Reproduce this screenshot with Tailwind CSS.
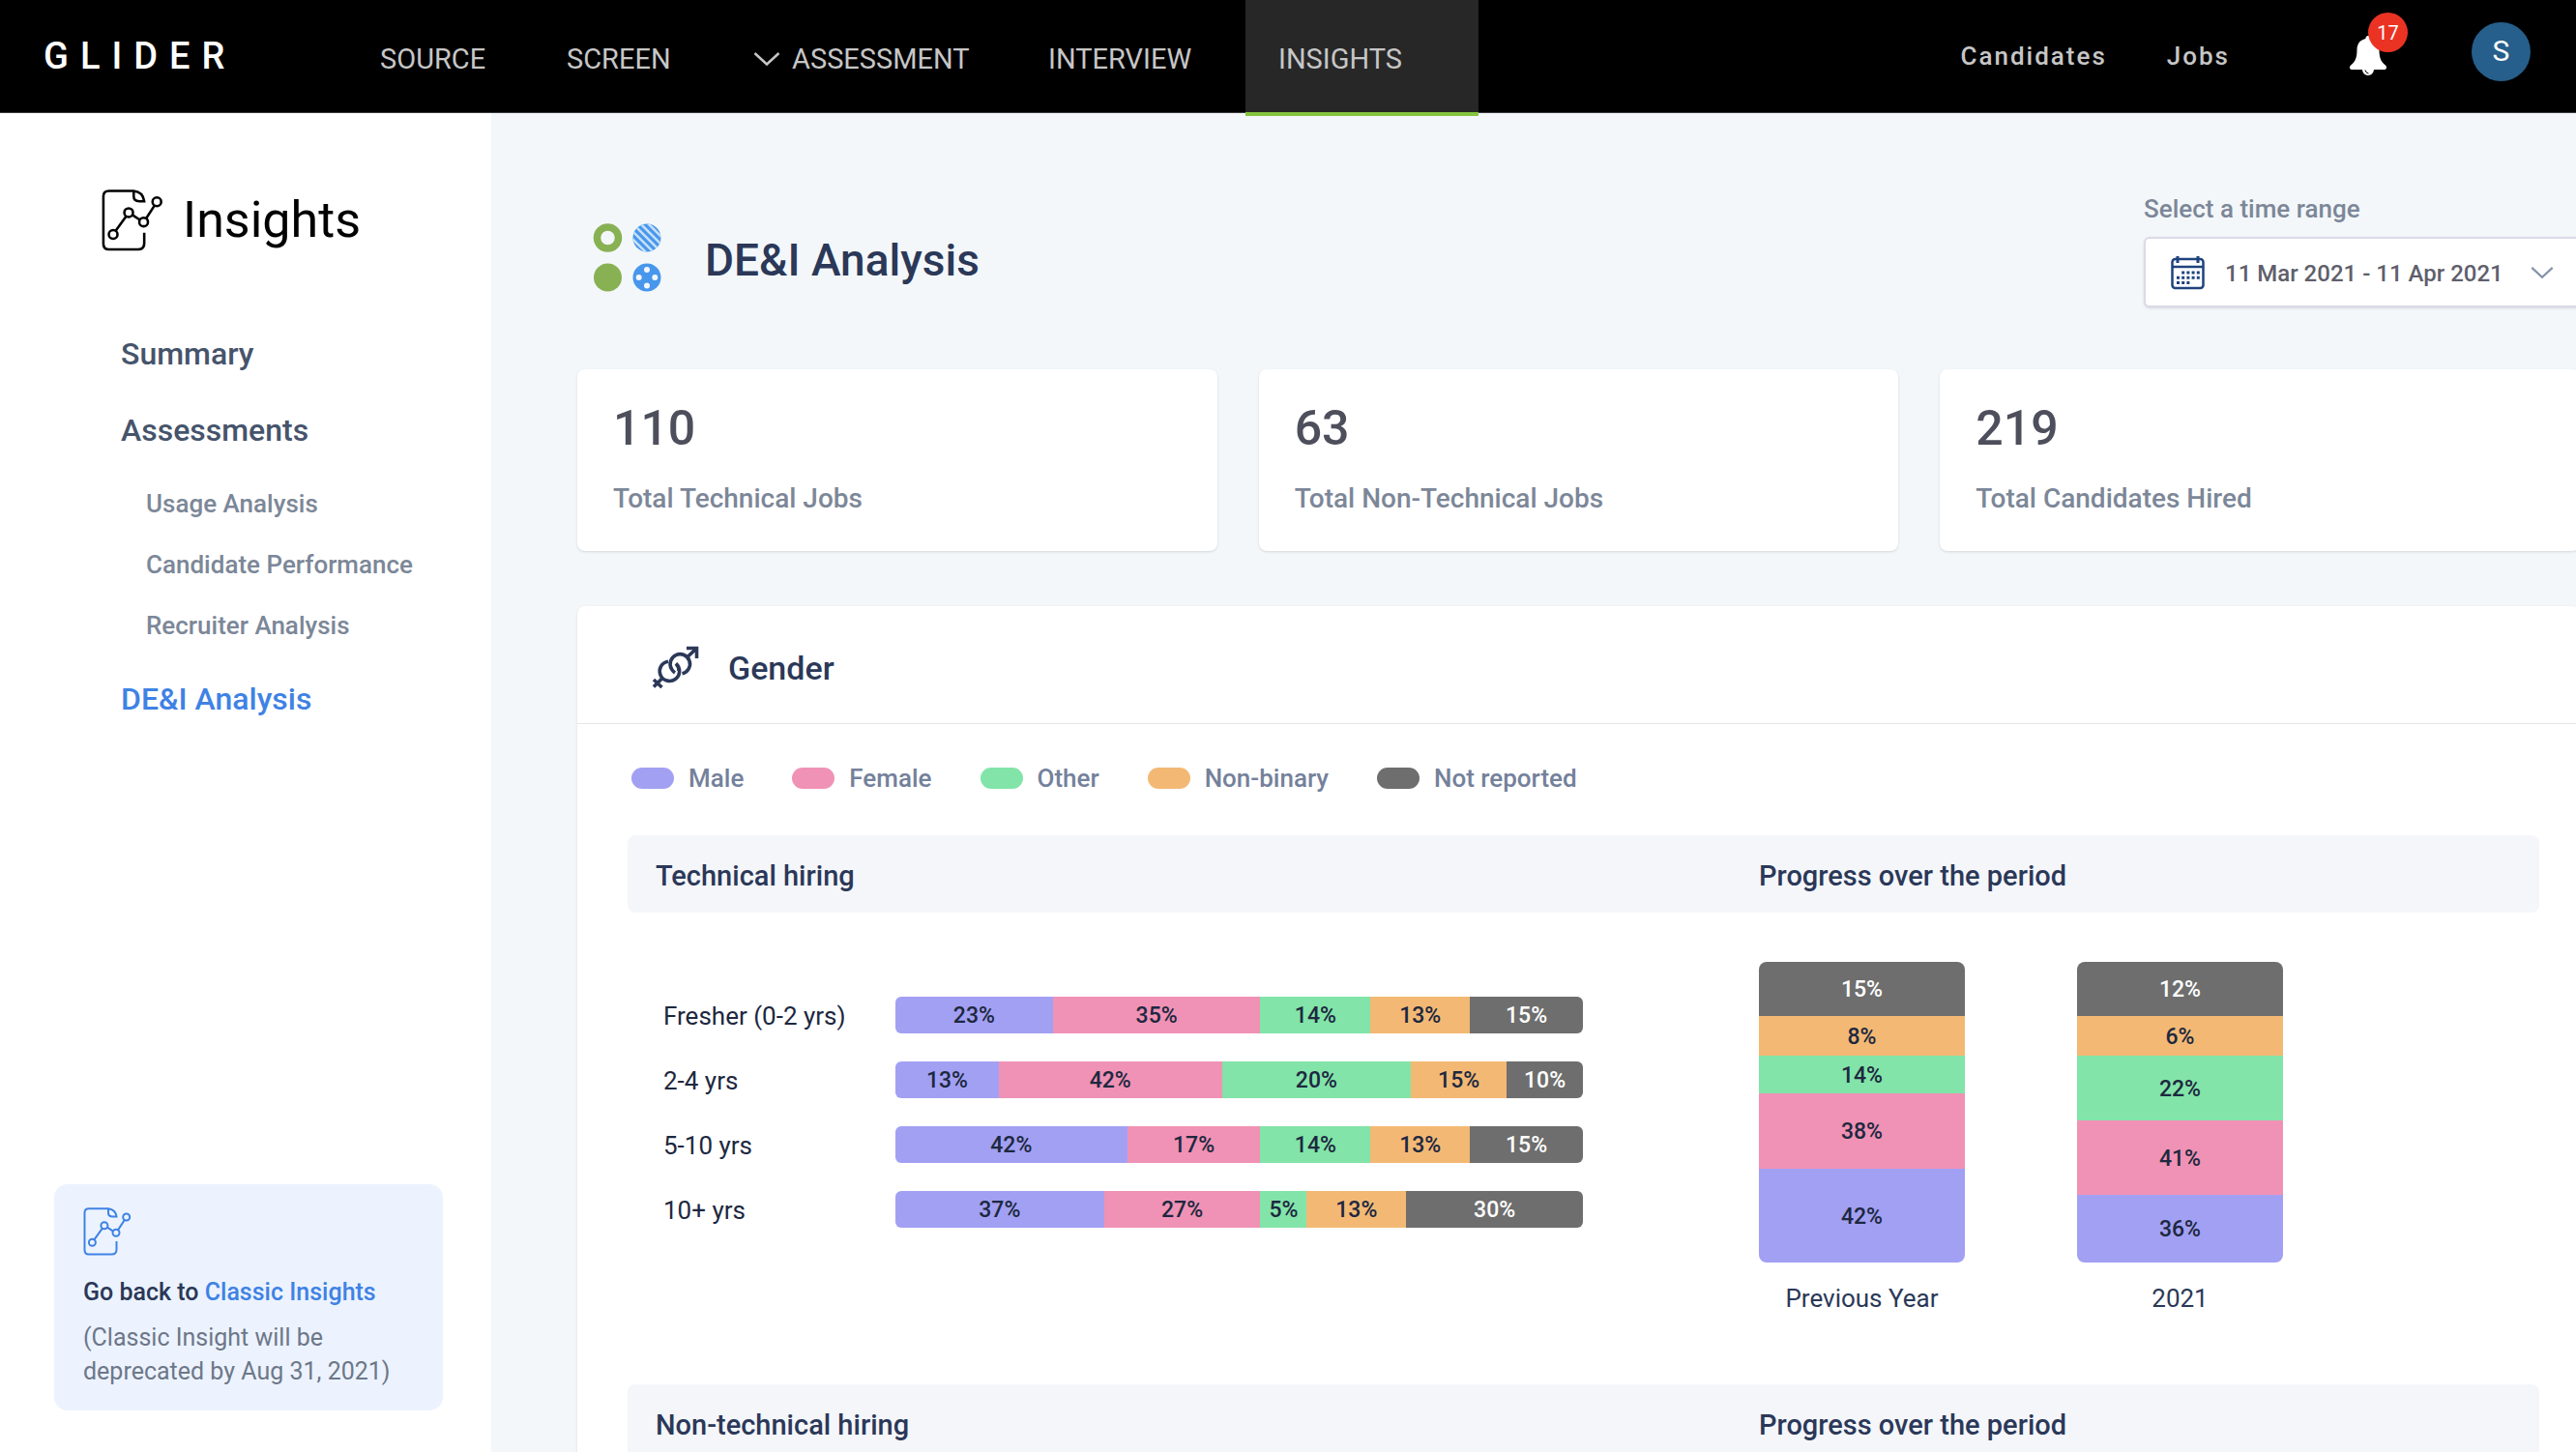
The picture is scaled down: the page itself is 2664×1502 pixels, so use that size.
<!DOCTYPE html>
<html lang="en">
  <head>
    <meta charset="UTF-8" />
    <meta name="viewport" content="width=device-width, initial-scale=1.0" />
    <title>Glider - DE&amp;I Analysis</title>
    <script src="https://cdn.jsdelivr.net/npm/@tailwindcss/browser@4"></script>
  </head>
  <body class="flex h-screen flex-col overflow-hidden bg-white font-['Roboto',sans-serif] text-[26px] leading-8 text-[#2b3858]">
    <!-- Shared icons -->
    <svg class="hidden">
      <symbol id="report" viewBox="0 0 50 50" fill="none" stroke="currentColor" stroke-width="2">
        <path d="M34.5 35V43.500Q34.500 48.500 29.500 48.500H6Q1.500 48.500 1.500 44V5.500Q1.500 1.200 6 1.200H26Q33.500 2 34.500 9.500H30.500Q26 9.500 26 5.500V1.200" />
        <path d="M11.400 33.400L19.900 21.600M25 20.600L31 24.600M36 23.400L42.800 13" />
        <circle cx="9.400" cy="36.300" r="3.500" />
        <circle cx="21.900" cy="18.700" r="3.500" />
        <circle cx="34" cy="26.300" r="3.500" />
        <circle cx="44.700" cy="10" r="3.500" />
      </symbol>
      <symbol id="chevron" viewBox="0 0 28 16" fill="none" stroke="currentColor" stroke-width="2.500">
        <path d="M1.500 2L14 13.500L26.500 2" />
      </symbol>
    </svg>

    <header class="flex h-[117px] shrink-0 items-stretch border-b border-[#3a3a3a] bg-black text-[#c6c6c6]">
      <a href="#" class="flex w-[393px] items-center pl-[45px] text-[38px] font-medium tracking-[12px] text-white">GLIDER</a>
      <nav class="flex items-stretch text-[29px]">
        <a href="#" class="flex w-[193px] items-center pt-1.5">SOURCE</a>
        <a href="#" class="flex w-[193px] items-center pt-1.5">SCREEN</a>
        <a href="#" class="flex w-[305px] items-center gap-3 pt-1.5">
          <svg class="h-4 w-7"><use href="#chevron" /></svg>ASSESSMENT
        </a>
        <a href="#" class="flex w-[204px] items-center pt-1.5">INTERVIEW</a>
        <a href="#" class="relative flex w-[241px] items-center bg-[#272727] pt-1.5 pl-[34px]">
          INSIGHTS
          <span class="absolute inset-x-0 -bottom-1 h-1 bg-[#86c440]"></span>
        </a>
      </nav>
      <div class="ml-auto flex items-center pr-[47px] text-[26px] font-medium tracking-[2px]">
        <a href="#" class="mr-[62px]">Candidates</a>
        <a href="#" class="mr-[123px]">Jobs</a>
        <button type="button" aria-label="Notifications" class="relative mr-[87px]">
          <svg class="h-[42px] w-10" viewBox="0 0 40 42" fill="#fff">
            <path d="M20 0a2.500 2.500 0 0 1 2.500 3C29 4.500 31.500 9 31.500 15C31.500 23 33.500 27 38 30.500C40 32.500 39 35 37 35H26A6 6 0 0 1 14 35H3C1 35 0 32.500 2 30.500C6.500 27 8.500 23 8.500 15C8.500 9 11 4.500 17.500 3A2.500 2.500 0 0 1 20 0Z" />
            <path d="M17 35.500Q17.500 38.500 20.500 39" fill="none" stroke="#000" />
          </svg>
          <span class="absolute -top-6 left-5 flex size-[41px] items-center justify-center rounded-full bg-[#ea3323] text-[20px] font-normal tracking-normal text-white">17</span>
        </button>
        <button type="button" class="mb-2.5 size-[61px] rounded-full bg-[#265f8b] text-[30px] font-normal tracking-normal text-white">S</button>
      </div>
    </header>

    <div class="flex min-h-0 flex-1">
      <aside class="flex w-[508px] shrink-0 flex-col">
        <div class="flex items-center gap-5 pt-[75px] pl-[105px] text-[52px] leading-[72px] text-black">
          <svg class="size-16"><use href="#report" /></svg>Insights
        </div>
        <nav class="flex flex-col pt-[82px] pl-[125px] font-medium">
          <a href="#" class="text-[32px] leading-10 text-[#46546b]">Summary</a>
          <a href="#" class="mt-[39px] text-[32px] leading-10 text-[#46546b]">Assessments</a>
          <div class="mt-10 flex flex-col gap-[31px] pl-[26px] text-[#7c8798]">
            <a href="#">Usage Analysis</a>
            <a href="#">Candidate Performance</a>
            <a href="#">Recruiter Analysis</a>
          </div>
          <a href="#" class="mt-10 text-[32px] leading-10 text-[#3f82e4]">DE&amp;I Analysis</a>
        </nav>
        <div class="mt-auto mr-[50px] mb-[43px] ml-14 rounded-[14px] bg-[#ecf3fe] px-[30px] pt-6 pb-[23px] text-[25px]">
          <svg class="size-[50px] text-[#3f82e4]"><use href="#report" /></svg>
          <p class="mt-[22px] leading-8 font-medium">Go back to <a href="#" class="text-[#3f82e4]">Classic Insights</a></p>
          <p class="mt-[13px] leading-[35px] text-[#6d7789]">(Classic Insight will be<br />deprecated by Aug 31, 2021)</p>
        </div>
      </aside>

      <main class="min-w-0 flex-1 overflow-hidden bg-[#f3f7fa] pt-[83px] pl-[89px]">
        <div class="-mr-1">
          <div class="flex items-center justify-between">
            <div class="flex items-center gap-11 pt-4 pl-4">
              <svg class="size-[72px]" viewBox="0 0 72 72">
                <clipPath id="disc"><circle cx="56" cy="15" r="14.500" /></clipPath>
                <circle cx="15.500" cy="15" r="11" fill="none" stroke="#88b153" stroke-width="7.500" />
                <circle cx="15.500" cy="56" r="14.500" fill="#88b153" />
                <circle cx="56" cy="15" r="14.500" fill="#4897ec" />
                <path clip-path="url(#disc)" stroke="#c5dff8" stroke-width="2.600" d="M25 0L65 40M33 0L73 40M41 0L81 40M49 0L89 40M57 0L97 40" />
                <circle cx="56" cy="56" r="14.500" fill="#4897ec" />
                <g fill="#f3f7fa">
                  <circle cx="56" cy="48" r="3" />
                  <circle cx="56" cy="64.500" r="3" />
                  <circle cx="47.700" cy="56" r="3" />
                  <circle cx="64.300" cy="56" r="3" />
                </g>
              </svg>
              <h1 class="pt-1 text-[46px] leading-[56px] font-medium">DE&amp;I Analysis</h1>
            </div>
            <div class="w-[451px]">
              <label for="range" class="block font-medium text-[#7c8798]">Select a time range</label>
              <div class="mt-[13px] flex h-[73px] items-center rounded-md border-2 border-[#d9dbe6] bg-white pr-[25px] pl-[26px] shadow-sm">
                <svg class="mr-5 size-9 shrink-0" viewBox="0 0 36 36" fill="none" stroke="#1f437e" stroke-width="2.500">
                  <rect x="1.500" y="4" width="32" height="30" rx="3" />
                  <path d="M1.500 12H33.500" />
                  <path d="M7 1V8M28 1V8" stroke-width="3" />
                  <path stroke-width="3" stroke-dasharray="3 2.200" d="M11.200 18H30M6 23.200H30M6 28.400H19.500" />
                </svg>
                <select id="range" class="h-9 min-w-0 flex-1 appearance-none bg-transparent pt-0.5 text-[24px] font-medium text-[#5f5f6c] outline-none">
                  <option>11 Mar 2021 - 11 Apr 2021</option>
                </select>
                <svg class="h-3.5 w-6 shrink-0 text-[#8492a8]"><use href="#chevron" /></svg>
              </div>
            </div>
          </div>

          <div class="mt-[64px] grid grid-cols-3 gap-[43px]">
            <div class="rounded-lg bg-white px-[37px] pt-[31px] pb-9 shadow">
              <div class="text-[50px] leading-[60px] font-medium text-[#4e4f5c]">110</div>
              <div class="mt-[25px] text-[28px] leading-9 font-medium text-[#7c8798]">Total Technical Jobs</div>
            </div>
            <div class="rounded-lg bg-white px-[37px] pt-[31px] pb-9 shadow">
              <div class="text-[50px] leading-[60px] font-medium text-[#4e4f5c]">63</div>
              <div class="mt-[25px] text-[28px] leading-9 font-medium text-[#7c8798]">Total Non-Technical Jobs</div>
            </div>
            <div class="rounded-lg bg-white px-[37px] pt-[31px] pb-9 shadow">
              <div class="text-[50px] leading-[60px] font-medium text-[#4e4f5c]">219</div>
              <div class="mt-[25px] text-[28px] leading-9 font-medium text-[#7c8798]">Total Candidates Hired</div>
            </div>
          </div>

          <section class="mt-[57px] rounded-lg bg-white shadow">
            <div class="flex h-[122px] items-center gap-[30px] border-b border-[#e4e6e9] pt-1.5 pl-[77px]">
              <svg class="h-[45px] w-[49px]" viewBox="0 0 49 45" fill="none" stroke="currentColor" stroke-width="3.600">
                <path d="M17 16.200A10.200 10.200 0 1 0 25 18.500C27 20.500 28 22.500 28 26" />
                <path d="M31.500 28.800A10.200 10.200 0 1 0 20.500 24C21.500 26 22.500 27 24 28" />
                <path d="M37 11.500L46 3M36 2.500H46.500V13M11 33.500L2 42.500M2 35L10.500 43" />
              </svg>
              <h2 class="text-[34px] leading-10 font-medium">Gender</h2>
            </div>

            <ul class="flex gap-[50px] pt-10 pl-14 font-medium text-[#74819b]">
              <li class="flex items-center gap-[15px]"><span class="h-[22px] w-11 rounded-full bg-[#a2a0f3]"></span>Male</li>
              <li class="flex items-center gap-[15px]"><span class="h-[22px] w-11 rounded-full bg-[#f092b5]"></span>Female</li>
              <li class="flex items-center gap-[15px]"><span class="h-[22px] w-11 rounded-full bg-[#82e4a8]"></span>Other</li>
              <li class="flex items-center gap-[15px]"><span class="h-[22px] w-11 rounded-full bg-[#f3b974]"></span>Non-binary</li>
              <li class="flex items-center gap-[15px]"><span class="h-[22px] w-11 rounded-full bg-[#6e6e6e]"></span>Not reported</li>
            </ul>

            <div class="mt-[43px] mr-[42px] ml-[52px]">
              <div class="grid h-20 grid-cols-[1170fr_807fr] items-center rounded-lg bg-[#f4f6fa] pt-1 text-[29px] font-medium">
                <h3 class="pl-[29px]">Technical hiring</h3>
                <h3>Progress over the period</h3>
              </div>

              <div class="grid grid-cols-[1170fr_807fr] pb-[73px] text-[#1d2840]">
                <div class="flex flex-col gap-[29px] pt-[87px] pr-[182px] pl-[37px]">
                  <div class="flex h-[38px] items-center">
                    <div class="w-60 shrink-0 pt-0.5">Fresher (0-2 yrs)</div>
                    <div class="flex h-full flex-1 overflow-hidden rounded-md text-[23px] font-medium">
                      <div class="flex basis-0 items-center justify-center bg-[#a2a0f3] pt-0.5" style="flex-grow: 163">23%</div>
                      <div class="flex basis-0 items-center justify-center bg-[#f092b5] pt-0.5" style="flex-grow: 215">35%</div>
                      <div class="flex basis-0 items-center justify-center bg-[#82e4a8] pt-0.5" style="flex-grow: 114">14%</div>
                      <div class="flex basis-0 items-center justify-center bg-[#f3b974] pt-0.5" style="flex-grow: 103">13%</div>
                      <div class="flex basis-0 items-center justify-center bg-[#6e6e6e] pt-0.5 text-white" style="flex-grow: 117">15%</div>
                    </div>
                  </div>
                  <div class="flex h-[38px] items-center">
                    <div class="w-60 shrink-0 pt-0.5">2-4 yrs</div>
                    <div class="flex h-full flex-1 overflow-hidden rounded-md text-[23px] font-medium">
                      <div class="flex basis-0 items-center justify-center bg-[#a2a0f3] pt-0.5" style="flex-grow: 107">13%</div>
                      <div class="flex basis-0 items-center justify-center bg-[#f092b5] pt-0.5" style="flex-grow: 231">42%</div>
                      <div class="flex basis-0 items-center justify-center bg-[#82e4a8] pt-0.5" style="flex-grow: 196">20%</div>
                      <div class="flex basis-0 items-center justify-center bg-[#f3b974] pt-0.5" style="flex-grow: 99">15%</div>
                      <div class="flex basis-0 items-center justify-center bg-[#6e6e6e] pt-0.5 text-white" style="flex-grow: 79">10%</div>
                    </div>
                  </div>
                  <div class="flex h-[38px] items-center">
                    <div class="w-60 shrink-0 pt-0.5">5-10 yrs</div>
                    <div class="flex h-full flex-1 overflow-hidden rounded-md text-[23px] font-medium">
                      <div class="flex basis-0 items-center justify-center bg-[#a2a0f3] pt-0.5" style="flex-grow: 240">42%</div>
                      <div class="flex basis-0 items-center justify-center bg-[#f092b5] pt-0.5" style="flex-grow: 138">17%</div>
                      <div class="flex basis-0 items-center justify-center bg-[#82e4a8] pt-0.5" style="flex-grow: 114">14%</div>
                      <div class="flex basis-0 items-center justify-center bg-[#f3b974] pt-0.5" style="flex-grow: 103">13%</div>
                      <div class="flex basis-0 items-center justify-center bg-[#6e6e6e] pt-0.5 text-white" style="flex-grow: 117">15%</div>
                    </div>
                  </div>
                  <div class="flex h-[38px] items-center">
                    <div class="w-60 shrink-0 pt-0.5">10+ yrs</div>
                    <div class="flex h-full flex-1 overflow-hidden rounded-md text-[23px] font-medium">
                      <div class="flex basis-0 items-center justify-center bg-[#a2a0f3] pt-0.5" style="flex-grow: 216">37%</div>
                      <div class="flex basis-0 items-center justify-center bg-[#f092b5] pt-0.5" style="flex-grow: 162">27%</div>
                      <div class="flex basis-0 items-center justify-center bg-[#82e4a8] pt-0.5" style="flex-grow: 48">5%</div>
                      <div class="flex basis-0 items-center justify-center bg-[#f3b974] pt-0.5" style="flex-grow: 103">13%</div>
                      <div class="flex basis-0 items-center justify-center bg-[#6e6e6e] pt-0.5 text-white" style="flex-grow: 183">30%</div>
                    </div>
                  </div>
                </div>

                <div class="flex gap-[116px] pt-[51px]">
                  <div class="w-[213px] text-center">
                    <div class="overflow-hidden rounded-lg text-[23px] font-medium">
                      <div class="flex items-center justify-center bg-[#6e6e6e] pt-0.5 text-white" style="height: 56px">15%</div>
                      <div class="flex items-center justify-center bg-[#f3b974] pt-0.5" style="height: 41px">8%</div>
                      <div class="flex items-center justify-center bg-[#82e4a8] pt-0.5" style="height: 39px">14%</div>
                      <div class="flex items-center justify-center bg-[#f092b5] pt-0.5" style="height: 78px">38%</div>
                      <div class="flex items-center justify-center bg-[#a2a0f3] pt-0.5" style="height: 97px">42%</div>
                    </div>
                    <div class="mt-[21px] text-[#2b3858]">Previous Year</div>
                  </div>
                  <div class="w-[213px] text-center">
                    <div class="overflow-hidden rounded-lg text-[23px] font-medium">
                      <div class="flex items-center justify-center bg-[#6e6e6e] pt-0.5 text-white" style="height: 56px">12%</div>
                      <div class="flex items-center justify-center bg-[#f3b974] pt-0.5" style="height: 41px">6%</div>
                      <div class="flex items-center justify-center bg-[#82e4a8] pt-0.5" style="height: 67px">22%</div>
                      <div class="flex items-center justify-center bg-[#f092b5] pt-0.5" style="height: 77px">41%</div>
                      <div class="flex items-center justify-center bg-[#a2a0f3] pt-0.5" style="height: 70px">36%</div>
                    </div>
                    <div class="mt-[21px] text-[#2b3858]">2021</div>
                  </div>
                </div>
              </div>

              <div class="grid h-20 grid-cols-[1170fr_807fr] items-center rounded-lg bg-[#f4f6fa] pt-1 text-[29px] font-medium">
                <h3 class="pl-[29px]">Non-technical hiring</h3>
                <h3>Progress over the period</h3>
              </div>
            </div>
          </section>
        </div>
      </main>
    </div>
  </body>
</html>
